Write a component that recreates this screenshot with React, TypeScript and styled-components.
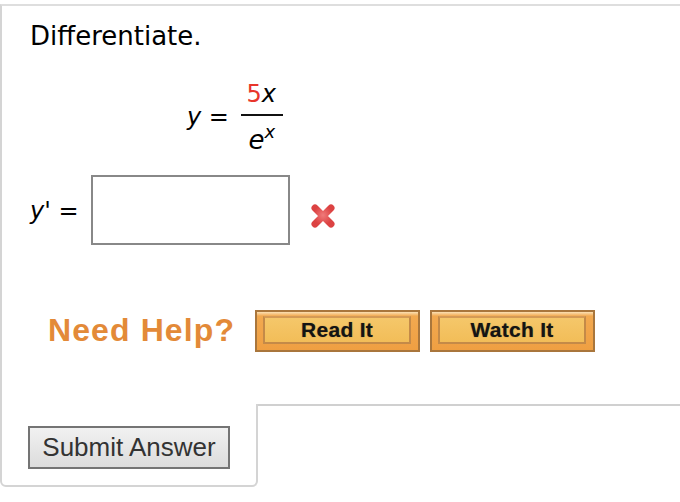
import React from 'react';
import styled, { createGlobalStyle } from 'styled-components';

const GlobalStyle = createGlobalStyle`
  html, body {
    margin: 0;
    padding: 0;
    background: #ffffff;
  }
  body {
    font-family: "DejaVu Sans", Verdana, sans-serif;
    color: #000;
  }
`

const Page = styled.div`
  width: 680px;
  height: 502px;
  padding-top: 4px;
  box-sizing: border-box;
  overflow: hidden;
`

const QuestionBox = styled.div`
  height: 400px;
  box-sizing: border-box;
  border-top: 2px solid #dedede;
  border-left: 2px solid #d4d4d4;
  padding: 15px 0 0 28px;
`

const Title = styled.div`
  font-size: 26px;
  line-height: 30px;
`

const Equation = styled.div`
  display: flex;
  align-items: center;
  margin-top: 31px;
  padding-left: 157px;
  font-size: 24px;
  line-height: 24px;
`

const Lhs = styled.span`
  margin-right: 4px;
  white-space: pre;
`

const Var = styled.i`
  font-style: italic;
`

const Fraction = styled.span`
  display: inline-flex;
  flex-direction: column;
  align-items: center;
`

const Numerator = styled.span`
  padding: 0 7px 8px 6px;
`

const Coef = styled.span`
  color: #e8352b;
`

const Bar = styled.span`
  align-self: stretch;
  height: 1.5px;
  background: #111;
`

const Denominator = styled.span`
  margin-top: 11px;
  font-size: 26px;
  line-height: 26px;
`

const Sup = styled.i`
  font-size: 18px;
  line-height: 0;
  vertical-align: 11px;
`

const AnswerRow = styled.div`
  display: flex;
  align-items: center;
  margin-top: 22px;
`

const AnswerLabel = styled.span`
  font-size: 24px;
  line-height: 24px;
  padding-top: 2px;
  white-space: pre;
`

const AnswerInput = styled.input`
  width: 199px;
  height: 70px;
  box-sizing: border-box;
  margin: 0 0 0 12px;
  border: 2px solid #888888;
  background: #fff;
  font-size: 22px;
  outline: none;
`

const WrongMark = styled.svg`
  margin: 12px 0 0 20px;
  width: 26px;
  height: 26px;
`

const HelpRow = styled.div`
  display: flex;
  align-items: center;
  margin: 65px 0 0 18px;
`

const HelpText = styled.span`
  font-family: "Liberation Sans", Arial, sans-serif;
  font-weight: bold;
  font-size: 32px;
  letter-spacing: 1.1px;
  color: #e38a38;
  margin-right: 20px;
`

const HelpButton = styled.button`
  display: flex;
  width: 165px;
  height: 42px;
  box-sizing: border-box;
  padding: 4px 7px 6px 6px;
  margin-right: 10px;
  border: 2px solid #a9763c;
  background: linear-gradient(#fbe0b4 0, #f2a950 4px, #ef9f42 100%);
  cursor: pointer;
`

const HelpButtonFace = styled.span`
  flex: 1;
  display: flex;
  align-items: center;
  justify-content: center;
  border: 2px solid #c48a48;
  border-top-color: #d59a55;
  background: linear-gradient(#f5c76a, #f2bd58);
  font-family: "Liberation Sans", Arial, sans-serif;
  font-weight: bold;
  font-size: 21px;
  letter-spacing: 0.3px;
  color: #141414;
  text-shadow: 0 0 1px rgba(0, 0, 0, 0.45);
`

const Footer = styled.div`
  display: flex;
  height: 83px;
`

const SubmitTab = styled.div`
  width: 258px;
  box-sizing: border-box;
  border-left: 2px solid #d4d4d4;
  border-right: 2px solid #d4d4d4;
  border-bottom: 2px solid #d4d4d4;
  border-radius: 0 0 6px 6px;
  padding: 22px 0 0 26px;
`

const Filler = styled.div`
  flex: 1;
  border-top: 2px solid #d0d0d0;
`

const SubmitButton = styled.button`
  width: 202px;
  height: 43px;
  box-sizing: border-box;
  border: 2px solid #747474;
  background: linear-gradient(#f1f1f1, #dcdcdc);
  font-family: "Liberation Sans", Arial, sans-serif;
  font-size: 26px;
  color: #333;
  padding: 0;
  cursor: pointer;
`

const App: React.FC = () => {
  return (
    <Page>
      <GlobalStyle />
      <QuestionBox>
        <Title>Differentiate.</Title>
        <Equation>
          <Lhs><Var>y</Var> = </Lhs>
          <Fraction>
            <Numerator><Coef>5</Coef><Var>x</Var></Numerator>
            <Bar />
            <Denominator><Var>e</Var><Sup>x</Sup></Denominator>
          </Fraction>
        </Equation>
        <AnswerRow>
          <AnswerLabel><Var>y'</Var> =</AnswerLabel>
          <AnswerInput type="text" />
          <WrongMark viewBox="0 0 26 26">
            <defs>
              <radialGradient id="xg" cx="50%" cy="45%" r="60%">
                <stop offset="0%" stopColor="#f07a7a" />
                <stop offset="100%" stopColor="#dc4242" />
              </radialGradient>
            </defs>
            <path d="M5 5 L21 21 M21 5 L5 21" stroke="url(#xg)" strokeWidth="7" strokeLinecap="round" fill="none" />
          </WrongMark>
        </AnswerRow>
        <HelpRow>
          <HelpText>Need Help?</HelpText>
          <HelpButton><HelpButtonFace>Read It</HelpButtonFace></HelpButton>
          <HelpButton><HelpButtonFace>Watch It</HelpButtonFace></HelpButton>
        </HelpRow>
      </QuestionBox>
      <Footer>
        <SubmitTab>
          <SubmitButton>Submit Answer</SubmitButton>
        </SubmitTab>
        <Filler />
      </Footer>
    </Page>
  );
};

export default App;
